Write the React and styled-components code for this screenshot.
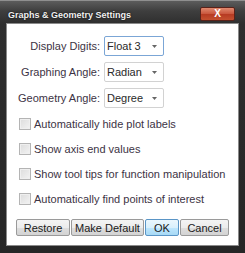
import React from 'react';
import styled, { createGlobalStyle } from 'styled-components';

const Global = createGlobalStyle`
  html, body {
    margin: 0;
    padding: 0;
    background: #2a2a2a;
  }
  * {
    box-sizing: border-box;
  }
`;

const Window = styled.div`
  width: 245px;
  height: 253px;
  display: flex;
  flex-direction: column;
  background: linear-gradient(#5c5c5c 0px, #3e3e3e 10px, #2e2e2e 23px, #262626 100%);
  border-top: 1px solid #8f8f8f;
  font-family: "Liberation Sans", Arial, sans-serif;
`;

const TitleBar = styled.div`
  height: 22px;
  display: flex;
  align-items: center;
  justify-content: space-between;
  padding: 5px 10px 0 8px;
`;

const Title = styled.span`
  color: #f0f0f0;
  font-size: 9px;
  font-weight: bold;
  text-shadow: 0 0 2px #000;
`;

const CloseButton = styled.div`
  width: 35px;
  height: 14px;
  margin-top: -1px;
  display: flex;
  align-items: center;
  justify-content: center;
  border: 1px solid #5a2219;
  border-radius: 2px;
  background: linear-gradient(#e0896f, #c9553c 50%, #b63a22 51%, #c4502f);
  color: #fff;
  font-size: 10px;
  font-weight: bold;
  line-height: 1;
`;

const Client = styled.div`
  flex: 1;
  margin: 0 6px 7px 6px;
  border: 1px solid #8a8a8a;
  background: #fff;
  padding: 12px 0 0 0;
  display: flex;
  flex-direction: column;
`;

const Fields = styled.div`
  display: grid;
  grid-template-columns: 93px 60px;
  column-gap: 4px;
  row-gap: 6px;
`;

const Label = styled.span`
  font-size: 11px;
  color: #3c3344;
  text-align: right;
  align-self: center;
`;

const Select = styled.div`
  height: 20px;
  display: flex;
  align-items: center;
  justify-content: space-between;
  padding: 0 6px 0 2px;
  border: 1px solid ${p => (p.$focused ? '#7ba6d6' : '#d2d2d2')};
  border-radius: 2px;
  font-size: 11px;
  color: #2a2a2a;
  background: #fff;
`;

const Checks = styled.div`
  display: flex;
  flex-direction: column;
  gap: 9px;
  margin-top: 8px;
  padding-left: 12px;
`;

const CheckRow = styled.label`
  height: 16px;
  display: flex;
  align-items: center;
  gap: 3px;
  font-size: 11px;
  color: #3c3344;
`;

const Box = styled.span`
  width: 12px;
  height: 12px;
  border: 1px solid #b4b4b4;
  background: linear-gradient(135deg, #dcdcdc, #f3f3f3);
  box-shadow: inset 0 0 0 1px #efefef;
`;

const Buttons = styled.div`
  display: flex;
  gap: 1px;
  margin-top: 12px;
  padding-left: 9px;
`;

const Button = styled.div`
  width: ${p => p.$w}px;
  height: 17px;
  display: flex;
  align-items: center;
  justify-content: center;
  border: 1px solid ${p => (p.$primary ? '#5a95c6' : '#9a9a9a')};
  border-radius: 2px;
  font-size: 11px;
  color: #1a1a1a;
  background: ${p =>
    p.$primary
      ? 'linear-gradient(#eaf6fd, #d9f0fc 50%, #bee6fd 51%, #a7d9f5)'
      : 'linear-gradient(#f4f4f4, #ececec 50%, #dedede 51%, #d3d3d3)'};
`;

const Arrow = () => (
  <svg width="5" height="3" viewBox="0 0 5 3">
    <path d="M0 0 H5 L2.5 3 Z" fill="#666" />
  </svg>
);

const fields = [
  ['Display Digits:', 'Float 3', true],
  ['Graphing Angle:', 'Radian', false],
  ['Geometry Angle:', 'Degree', false],
];

const checks = [
  'Automatically hide plot labels',
  'Show axis end values',
  'Show tool tips for function manipulation',
  'Automatically find points of interest',
];

export default function App() {
  return (
    <>
      <Global />
      <Window>
        <TitleBar>
          <Title>Graphs &amp; Geometry Settings</Title>
          <CloseButton>X</CloseButton>
        </TitleBar>
        <Client>
          <Fields>
            {fields.map(([label, value, focused]) => (
              <React.Fragment key={label}>
                <Label>{label}</Label>
                <Select $focused={focused}>
                  {value}
                  <Arrow />
                </Select>
              </React.Fragment>
            ))}
          </Fields>
          <Checks>
            {checks.map(c => (
              <CheckRow key={c}>
                <Box />
                {c}
              </CheckRow>
            ))}
          </Checks>
          <Buttons>
            <Button $w={54}>Restore</Button>
            <Button $w={73}>Make Default</Button>
            <Button $w={34} $primary>OK</Button>
            <Button $w={49}>Cancel</Button>
          </Buttons>
        </Client>
      </Window>
    </>
  );
}
